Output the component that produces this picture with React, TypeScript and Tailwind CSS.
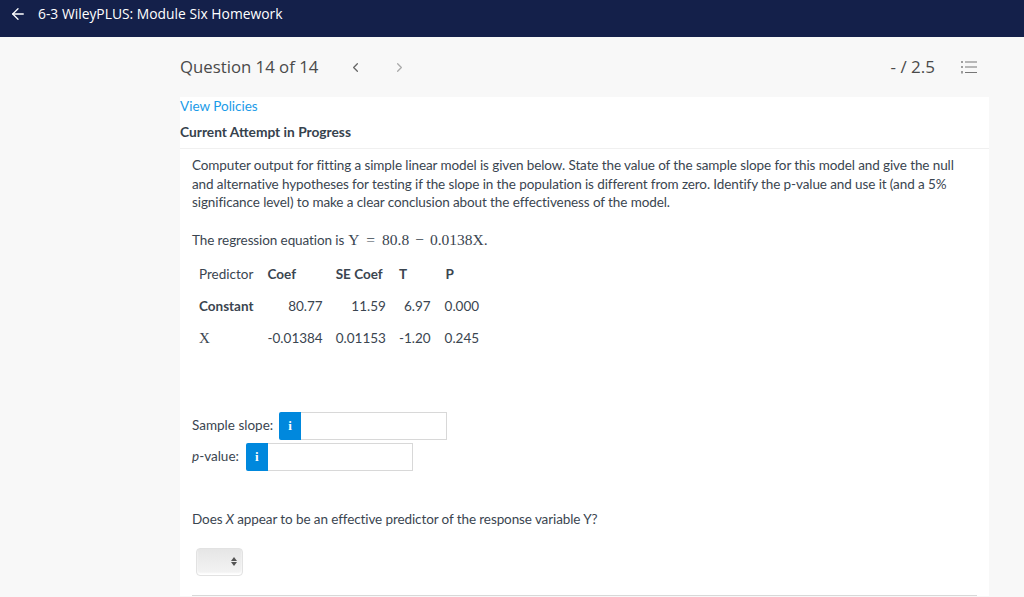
import { ArrowLeft, ChevronLeft, ChevronRight } from "lucide-react";

const lato = "font-['Lato',sans-serif]";
const serif = "font-['Liberation_Serif',serif]";

function ListIcon() {
  return (
    <svg width="17" height="14" viewBox="0 0 17 14" className="text-[#777]">
      <path d="M5 2h12M5 7h12M5 12.500h12" stroke="currentColor" strokeWidth="1" fill="none" />
      <path d="M1 1h2v2H1zM1 6h2v2H1zM1 11h2v2.500H1z" fill="currentColor" opacity="0.7" />
    </svg>
  );
}

function InfoInput({ width }: { width: string }) {
  return (
    <div className={`flex h-7 ${width}`}>
      <div className="flex w-[22px] shrink-0 items-center justify-center rounded-l-[2px] bg-[#0088dd]">
        <span className={`${serif} text-[13px] font-bold leading-none text-white`}>i</span>
      </div>
      <div className="grow border border-l-0 border-[#d8d8d8] bg-white" />
    </div>
  );
}

export default function App() {
  return (
    <div className={`${lato} h-[597px] w-[1024px] overflow-hidden bg-[#f8f8f8] text-[13.500px] text-[#3a4550]`}>
      <header className="flex h-[37px] items-center bg-[#14204a] pb-[9px] pl-[9px] text-white">
        <ArrowLeft size={18} strokeWidth={1.75} />
        <h1 className="ml-[11px] font-['Open_Sans',sans-serif] text-[13.850px] font-medium">
          6-3 WileyPLUS: Module Six Homework
        </h1>
      </header>

      <div className="flex h-[60px] items-center pl-[180px] pr-[47px] font-['Open_Sans',sans-serif] text-[#4a4a4a]">
        <span className="text-[16.750px]">Question 14 of 14</span>
        <ChevronLeft size={15} strokeWidth={2} className="ml-[30px] text-[#666]" />
        <ChevronRight size={15} strokeWidth={2} className="ml-[29px] text-[#aaa]" />
        <span className="ml-auto text-[17px]">- / 2.5</span>
        <span className="ml-[25px]"><ListIcon /></span>
      </div>

      <main className="ml-[180px] w-[809px] bg-white">
        <a className="block text-[13.500px] leading-[18px] text-[#1a9be8]">View Policies</a>
        <div className="mt-[8px] border-b border-[#f0f0f0] pb-[7px] text-[13.750px] font-bold leading-[18px] text-[#36424d]">
          Current Attempt in Progress
        </div>

        <div className="px-[12px] pt-[7px]">
          <p className="leading-[18.500px] tracking-[-0.1px]">
            Computer output for fitting a simple linear model is given below. State the value of the sample slope for this model and give the null and alternative hypotheses for testing if the slope in the population is different from zero. Identify the p-value and use it (and a 5% significance level) to make a clear conclusion about the effectiveness of the model.
          </p>

          <p className="mt-[19px] flex items-baseline leading-[18px] tracking-[-0.1px]">
            The regression equation is
            <span className={`${serif} ml-[4px] text-[15.500px] tracking-normal`}>Y</span>
            <span className={`${serif} mx-[7px] text-[15.500px] tracking-normal`}>=</span>
            <span className={`${serif} text-[15.500px] tracking-normal`}>80.8</span>
            <span className={`${serif} mx-[6px] text-[15.500px] tracking-normal`}>−</span>
            <span className={`${serif} text-[15.500px] tracking-normal`}>0.0138X.</span>
          </p>

          <table className="ml-[7px] mt-[10px] border-collapse">
            <tbody>
              <tr className="h-[32px]">
                <td className="pr-[14px]">Predictor</td>
                <td className="pr-[13px] font-bold">Coef</td>
                <td className="pr-[13px] font-bold">SE Coef</td>
                <td className="pr-[14px] font-bold">T</td>
                <td className="font-bold"><span className="ml-[1px]">P</span></td>
              </tr>
              <tr className="h-[32px]">
                <td className="pr-[14px] font-bold">Constant</td>
                <td className="pr-[13px] text-right">80.77</td>
                <td className="pr-[13px] text-right">11.59</td>
                <td className="pr-[14px] text-right">6.97</td>
                <td>0.000</td>
              </tr>
              <tr className="h-[32px]">
                <td className={`${serif} pr-[14px] text-[15px]`}>X</td>
                <td className="pr-[13px] text-right">-0.01384</td>
                <td className="pr-[13px] text-right">0.01153</td>
                <td className="pr-[14px] text-right">-1.20</td>
                <td>0.245</td>
              </tr>
            </tbody>
          </table>

          <div className="mt-[57px] flex items-center gap-[6px]">
            <span>Sample slope:</span>
            <InfoInput width="w-[168px]" />
          </div>
          <div className="mt-[3px] flex items-center gap-[7px]">
            <span><i>p</i>-value:</span>
            <InfoInput width="w-[167px]" />
          </div>

          <p className="mt-[39px] leading-[18px] tracking-[-0.1px]">
            Does <i>X</i> appear to be an effective predictor of the response variable Y?
          </p>

          <div className="ml-[4px] mt-[20px] flex h-[28px] w-[47px] items-center justify-end rounded-[4px] border border-[#e2e2e2] bg-gradient-to-b from-[#e6e6e6] to-[#f4f4f4] pr-[5px] shadow-[inset_0_-2px_2px_#ffffff]">
            <div className="flex flex-col gap-[1px]">
              <div className="h-0 w-0 border-x-[3px] border-b-[4px] border-x-transparent border-b-[#555]" />
              <div className="h-0 w-0 border-x-[3px] border-t-[4px] border-x-transparent border-t-[#555]" />
            </div>
          </div>

          <div className="mt-[19px] border-t border-[#d8d8d8]" />
        </div>
      </main>
    </div>
  );
}
